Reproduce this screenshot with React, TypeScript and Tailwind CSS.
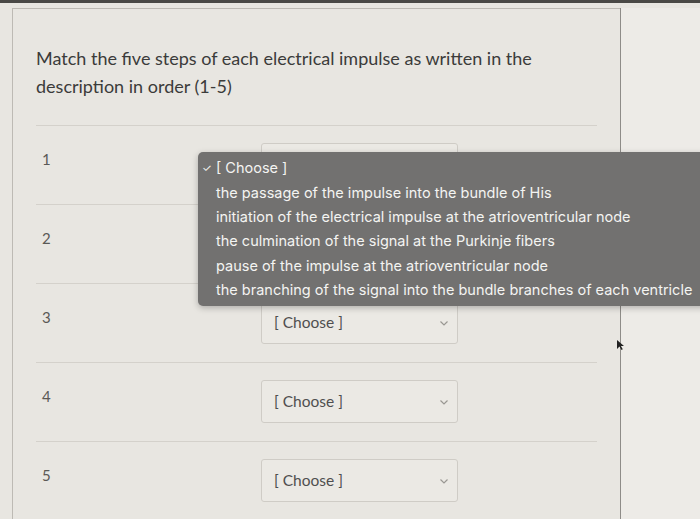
import React from "react";

const options = [
  "the passage of the impulse into the bundle of His",
  "initiation of the electrical impulse at the atrioventricular node",
  "the culmination of the signal at the Purkinje fibers",
  "pause of the impulse at the atrioventricular node",
  "the branching of the signal into the bundle branches of each ventricle",
];

function Select({ covered }: { covered?: boolean }) {
  return (
    <div className="w-[197px] h-[43px] border border-[#cfccc6] rounded-[3px] bg-[#ebe9e4] flex items-center justify-between pl-[12px] pr-[8px]">
      {covered ? (
        <span />
      ) : (
        <span className="text-[15.5px] text-[#4f4f4f]" style={{ fontFamily: "Lato, sans-serif" }}>
          [ Choose ]
        </span>
      )}
      <svg width="10" height="8" viewBox="0 0 10 8">
        <path d="M1.5 2.5 L5 6 L8.5 2.5" fill="none" stroke="#9a9893" strokeWidth="1.2" />
      </svg>
    </div>
  );
}

export default function App() {
  return (
    <div
      className="relative w-[700px] h-[519px] overflow-hidden bg-[#e8e6e1] flex flex-col"
      style={{ fontFamily: "Lato, sans-serif" }}
    >
      <div className="h-[3px] bg-[#4a4946] shrink-0" />
      <div className="flex flex-1 pt-[5px]">
        <div className="w-[12px] shrink-0" />
        <div className="w-[608px] shrink-0 border-l border-t border-[#bdbab4] pl-[23px] pr-[23px] pt-[35px]">
          <p className="text-[18px] leading-[28px] text-[#3b3b3a] w-[540px]">
            Match the five steps of each electrical impulse as written in the description in order (1-5)
          </p>
          <div className="mt-[25px] border-t border-[#d4d1cb]">
            {[1, 2, 3, 4, 5].map((n) => (
              <div
                key={n}
                className={`h-[79px] flex items-start ${n < 5 ? "border-b border-[#d4d1cb]" : ""}`}
              >
                <div className="w-[225px] pl-[6px] pt-[22px] text-[15px] text-[#5a5956]">{n}</div>
                <div className="pt-[17px]">
                  <Select covered={n < 3} />
                </div>
              </div>
            ))}
          </div>
        </div>
        <div className="flex-1 border-l border-[#8e8c88] bg-[#edebe7]" />
      </div>

      <div
        className="absolute left-[198px] top-[152px] w-[520px] h-[154px] rounded-[5px] bg-[#727170] shadow-[0_2px_6px_rgba(0,0,0,0.25)] pt-[4px]"
        style={{ fontFamily: "Inter, 'Noto Sans', sans-serif" }}
      >
        <div className="flex items-center h-[24.4px] text-[14.5px] text-[#f4f4f2]">
          <span className="w-[18px] pl-[4px] text-[11px]">✓</span>
          <span>[ Choose ]</span>
        </div>
        {options.map((o) => (
          <div key={o} className="flex items-center h-[24.4px] text-[14.5px] text-[#f4f4f2] pl-[18px] whitespace-nowrap">
            {o}
          </div>
        ))}
      </div>

      <svg className="absolute left-[616px] top-[339px]" width="9" height="12" viewBox="0 0 9 12">
        <path d="M1 1 L1 10 L3.5 7.5 L5.5 11 L6.8 10.3 L4.9 7 L8 7 Z" fill="#222" />
      </svg>
    </div>
  );
}
